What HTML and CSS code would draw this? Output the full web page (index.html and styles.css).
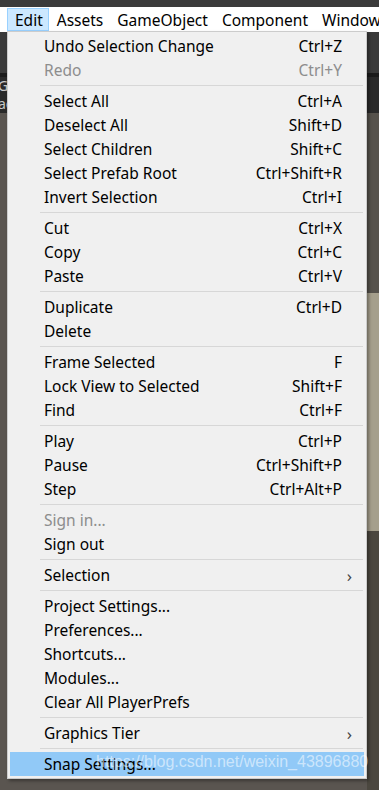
FILE: index.html
```html
<!DOCTYPE html>
<html lang="en">
<head>
  <meta charset="UTF-8" />
  <title>Unity - Edit Menu</title>
  <link rel="stylesheet" href="styles.css">
</head>
<body>
  <div class="titlebar"></div>

  <!-- Top menu bar -->
  <div class="menubar">
    <span class="menubar-item active">Edit</span>
    <span class="menubar-item">Assets</span>
    <span class="menubar-item">GameObject</span>
    <span class="menubar-item">Component</span>
    <span class="menubar-item">Window</span>
  </div>

  <!-- Editor behind the menu -->
  <div class="editor">
    <div class="toolbar">
      <div class="toolbar-row"></div>
      <div class="toolbar-row tab">G</div>
      <div class="toolbar-row tab">ac</div>
    </div>
    <div class="scene"></div>
  </div>

  <!-- Edit dropdown -->
  <div class="dropdown">
    <div class="item"><span>Undo Selection Change</span><span class="key">Ctrl+Z</span></div>
    <div class="item disabled"><span>Redo</span><span class="key">Ctrl+Y</span></div>
    <div class="sep"></div>
    <div class="item"><span>Select All</span><span class="key">Ctrl+A</span></div>
    <div class="item"><span>Deselect All</span><span class="key">Shift+D</span></div>
    <div class="item"><span>Select Children</span><span class="key">Shift+C</span></div>
    <div class="item"><span>Select Prefab Root</span><span class="key">Ctrl+Shift+R</span></div>
    <div class="item"><span>Invert Selection</span><span class="key">Ctrl+I</span></div>
    <div class="sep"></div>
    <div class="item"><span>Cut</span><span class="key">Ctrl+X</span></div>
    <div class="item"><span>Copy</span><span class="key">Ctrl+C</span></div>
    <div class="item"><span>Paste</span><span class="key">Ctrl+V</span></div>
    <div class="sep"></div>
    <div class="item"><span>Duplicate</span><span class="key">Ctrl+D</span></div>
    <div class="item"><span>Delete</span></div>
    <div class="sep"></div>
    <div class="item"><span>Frame Selected</span><span class="key">F</span></div>
    <div class="item"><span>Lock View to Selected</span><span class="key">Shift+F</span></div>
    <div class="item"><span>Find</span><span class="key">Ctrl+F</span></div>
    <div class="sep"></div>
    <div class="item"><span>Play</span><span class="key">Ctrl+P</span></div>
    <div class="item"><span>Pause</span><span class="key">Ctrl+Shift+P</span></div>
    <div class="item"><span>Step</span><span class="key">Ctrl+Alt+P</span></div>
    <div class="sep"></div>
    <div class="item disabled"><span>Sign in...</span></div>
    <div class="item"><span>Sign out</span></div>
    <div class="sep"></div>
    <div class="item"><span>Selection</span><span class="arrow">&rsaquo;</span></div>
    <div class="sep"></div>
    <div class="item"><span>Project Settings...</span></div>
    <div class="item"><span>Preferences...</span></div>
    <div class="item"><span>Shortcuts...</span></div>
    <div class="item"><span>Modules...</span></div>
    <div class="item"><span>Clear All PlayerPrefs</span></div>
    <div class="sep"></div>
    <div class="item"><span>Graphics Tier</span><span class="arrow">&rsaquo;</span></div>
    <div class="sep"></div>
    <div class="item hover"><span>Snap Settings...</span></div>
  </div>

  <div class="watermark">https://blog.csdn.net/weixin_43896880</div>
</body>
</html>
```

FILE: styles.css
```css
html, body {
  margin: 0;
  height: 100%;
}

body {
  font-family: "Noto Sans", "Open Sans", sans-serif;
  font-size: 15.5px;
  background: #5a5550;
  display: flex;
  flex-direction: column;
  overflow: hidden;
}

.titlebar {
  height: 7px;
  background: #3b3b3b;
}

/* Menu bar */
.menubar {
  display: flex;
  height: 25px;
  background: #ffffff;
  padding-left: 7px;
  white-space: nowrap;
}

.menubar-item {
  display: flex;
  align-items: center;
  padding: 0 5px 0 7px;
  height: 23px;
  margin-top: 1px;
  border: 1px solid transparent;
  box-sizing: border-box;
  color: #000;
}

.menubar-item.active {
  background: #cce8ff;
  border-color: #99d1ff;
}

/* Editor behind */
.editor {
  flex: 1;
  display: flex;
  flex-direction: column;
}

.toolbar {
  background: #282828;
}

.toolbar-row {
  height: 41px;
  background: #3a3a3a;
  border-bottom: 4px solid #1b1b1b;
}

.toolbar-row.tab {
  height: 18px;
  border-bottom: none;
  background: #2a2a2a;
  color: #c8c8c8;
  font-size: 14px;
  line-height: 18px;
  text-indent: -2px;
}

.scene {
  flex: 1;
  background:
    linear-gradient(#56524c 0, #56524c 180px, #a59f8c 180px, #a59f8c 418px, #4b473f 418px) right top / 12px 100% no-repeat,
    #5a5550;
}

/* Dropdown */
.dropdown {
  position: absolute;
  left: 7px;
  top: 31px;
  width: 358px;
  padding: 2px 0;
  background: #f0f0f0;
  border: 1px solid #cccccc;
  box-shadow: 2px 2px 3px rgba(0, 0, 0, 0.35);
}

.item {
  display: flex;
  align-items: center;
  justify-content: space-between;
  height: 24px;
  margin: 0 2px;
  padding: 0 22px 0 34px;
  color: #000;
  white-space: nowrap;
}

.item.disabled {
  color: #8d8d8d;
}

.item.hover {
  background: #91c9f7;
}

.key {
  text-align: right;
}

.arrow {
  color: #444;
  font-size: 17px;
  margin-right: -10px;
}

.sep {
  height: 1px;
  margin: 3px 3px 3px 32px;
  background: #d7d7d7;
}

.watermark {
  position: absolute;
  left: 96px;
  top: 753px;
  font-family: "Liberation Sans", Arial, sans-serif;
  font-size: 16px;
  color: rgba(255, 255, 255, 0.55);
  white-space: nowrap;
}
```
